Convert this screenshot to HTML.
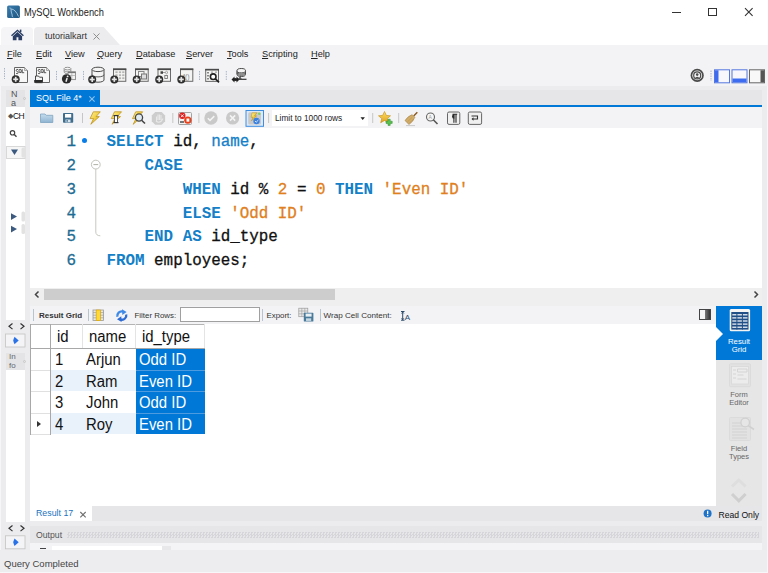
<!DOCTYPE html>
<html><head><meta charset="utf-8">
<style>
*{margin:0;padding:0;box-sizing:border-box}
html,body{width:768px;height:573px;overflow:hidden;background:#fff;font-family:"Liberation Sans",sans-serif;color:#000}
.a{position:absolute}
.t{position:absolute;white-space:nowrap;line-height:1}
.mono{font-family:"Liberation Mono",monospace}
</style></head><body>
<!-- title bar -->
<div class="a" style="left:0;top:0;width:768px;height:27px;background:#fff"></div>
<svg class="a" style="left:0;top:0" width="40" height="45" viewBox="0 0 40 45">
<defs><linearGradient id="tg" x1="0" y1="0" x2="1" y2="1"><stop offset="0" stop-color="#3a7cae"/><stop offset="1" stop-color="#1d5580"/></linearGradient></defs>
<rect x="7.1" y="5.5" width="12.8" height="12.6" rx="1.6" fill="url(#tg)"/>
<path d="M9.5,8 q1,0 2,1 q4,0.5 7,7.5 M11,9 q0,3 1.2,6 q-0.5,1.3 0.8,2.2" stroke="#d8e8f4" stroke-width="0.8" fill="none" opacity="0.85"/>
</svg>
<div class="t" style="left:24px;top:7.8px;font-size:10.2px;color:#222;transform:scaleX(0.91);transform-origin:0 0">MySQL Workbench</div>
<div class="a" style="left:672px;top:12px;width:9px;height:1px;background:#333"></div>
<div class="a" style="left:708px;top:8px;width:9px;height:8px;border:1px solid #333"></div>
<svg class="a" style="left:740px;top:4px" width="18" height="16" viewBox="740 4 18 16"><path d="M745,8.2 l7.6,7.6 M752.6,8.2 l-7.6,7.6" stroke="#333" stroke-width="1.1"/></svg>

<!-- tab strip -->
<div class="a" style="left:1px;top:27px;width:32px;height:18px;background:#f5f5f7;border-radius:4px 4px 0 0"></div>
<div class="a" style="left:34px;top:27px;width:86px;height:18px;background:#ececef;clip-path:polygon(0 0,81% 0,100% 100%,0 100%);border-radius:4px 0 0 0"></div>
<div class="t" style="left:45px;top:32px;font-size:9px;color:#333">tutorialkart</div>
<svg class="a" style="left:90px;top:30px" width="14" height="14" viewBox="90 30 14 14"><path d="M93.5,33.5 l6,6 M99.5,33.5 l-6,6" stroke="#8a8a8a" stroke-width="0.95"/></svg>

<svg class="a" style="left:0;top:0" width="40" height="45" viewBox="0 0 40 45"><path d="M17.45,29.4 L11,35.3 L12,36.3 L17.45,31.3 L22.9,36.3 L23.9,35.3 Z" fill="#2b3f66"/>
<rect x="19.8" y="29.6" width="1.6" height="2.6" fill="#2b3f66"/>
<path d="M12.8,36.2 L17.45,32 L22.1,36.2 V40.3 H18.4 V37.3 H16.5 V40.3 H12.8 Z" fill="#2b3f66"/>
</svg>
<!-- menu + toolbar bg -->
<div class="a" style="left:0;top:45px;width:768px;height:41px;background:#f3f3f5"></div>
<div class="t" style="left:7px;top:49.6px;font-size:9.2px;color:#222"><u style="text-underline-offset:1.3px">F</u>ile</div>
<div class="t" style="left:36px;top:49.6px;font-size:9.2px;color:#222"><u style="text-underline-offset:1.3px">E</u>dit</div>
<div class="t" style="left:65px;top:49.6px;font-size:9.2px;color:#222"><u style="text-underline-offset:1.3px">V</u>iew</div>
<div class="t" style="left:97px;top:49.6px;font-size:9.2px;color:#222"><u style="text-underline-offset:1.3px">Q</u>uery</div>
<div class="t" style="left:136px;top:49.6px;font-size:9.2px;color:#222"><u style="text-underline-offset:1.3px">D</u>atabase</div>
<div class="t" style="left:186px;top:49.6px;font-size:9.2px;color:#222"><u style="text-underline-offset:1.3px">S</u>erver</div>
<div class="t" style="left:227px;top:49.6px;font-size:9.2px;color:#222"><u style="text-underline-offset:1.3px">T</u>ools</div>
<div class="t" style="left:262px;top:49.6px;font-size:9.2px;color:#222"><u style="text-underline-offset:1.3px">S</u>cripting</div>
<div class="t" style="left:311px;top:49.6px;font-size:9.2px;color:#222"><u style="text-underline-offset:1.3px">H</u>elp</div>

<!-- main bg -->
<div class="a" style="left:0;top:86px;width:768px;height:464px;background:#ececef"></div>

<!-- left sidebar -->
<div class="a" style="left:0;top:86px;width:1px;height:464px;background:#f6f6f8"></div>
<div class="a" style="left:6px;top:90px;width:19px;height:17px;background:#e4e4e7"></div>
<div class="t" style="left:11px;top:89.5px;font-size:9px;line-height:9px;color:#555">N<br>a</div>
<div class="a" style="left:23px;top:97px;width:3px;height:3px;border:1px solid #c8c8c8;border-radius:50%"></div>
<div class="a" style="left:6px;top:107px;width:19px;height:213px;background:#fff"></div>
<div class="t" style="left:13px;top:112px;font-size:8.5px;color:#111;letter-spacing:-0.6px">CH</div>
<div class="t" style="left:8px;top:112px;font-size:7px;color:#555">&#x25C6;</div>
<svg class="a" style="left:0;top:0" width="40" height="573" viewBox="0 0 40 573">
<circle cx="12.5" cy="132.8" r="2.2" fill="none" stroke="#444" stroke-width="1.2"/><line x1="14" y1="134.3" x2="16.5" y2="136.8" stroke="#444" stroke-width="1.4"/>
<rect x="6.5" y="146.5" width="18.5" height="12" fill="#f6f6f6" stroke="#d8d8d8" stroke-width="1"/>
<path d="M11,149.5 h7 l-3.5,5.5z" fill="#3c5a80"/>
<rect x="21.5" y="147.5" width="3.5" height="10" rx="1.5" fill="#e2e2e2"/>
<path d="M11,213.3 v6.6 l6,-3.3z" fill="#3c5a80"/>
<path d="M11,225.8 v6.6 l6,-3.3z" fill="#3c5a80"/>
<rect x="21.5" y="211.5" width="3.5" height="10" rx="1.5" fill="#e2e2e2"/><rect x="21.5" y="224" width="3.5" height="10" rx="1.5" fill="#e2e2e2"/>
<path d="M12.5,323.5 l-3.5,2.8 l3.5,2.8 M20.5,323.5 l3.5,2.8 l-3.5,2.8" stroke="#333" stroke-width="1.2" fill="none"/>
<rect x="5.5" y="334" width="19.5" height="13" fill="#f4f4f6" stroke="#c4c4c4" stroke-width="0.8"/>
<path d="M14.5,336.8 l4.2,3.7 l-4.2,3.7 l-1.3,-3.7z" fill="#2a72e8"/><path d="M14.5,336.8 l-1.3,3.7 l1.3,3.7 l-1.5,-3.7z" fill="#5a9af0"/>
<path d="M12.5,525.5 l-3.5,2.8 l3.5,2.8 M20.5,525.5 l3.5,2.8 l-3.5,2.8" stroke="#333" stroke-width="1.2" fill="none"/>
<rect x="5.5" y="535.8" width="19.5" height="13" fill="#f4f4f6" stroke="#c4c4c4" stroke-width="0.8"/>
<path d="M14.5,538.5 l4.2,3.7 l-4.2,3.7 l-1.3,-3.7z" fill="#2a72e8"/><path d="M14.5,538.5 l-1.3,3.7 l1.3,3.7 l-1.5,-3.7z" fill="#5a9af0"/>
</svg>
<div class="a" style="left:6px;top:352.5px;width:19px;height:17px;background:#e4e4e7"></div>
<div class="t" style="left:9px;top:353px;font-size:8px;line-height:8.5px;color:#666">In<br>fo</div>
<div class="a" style="left:23px;top:360px;width:3px;height:3px;border:1px solid #c8c8c8;border-radius:50%"></div>
<div class="a" style="left:6px;top:369.5px;width:19px;height:152px;background:#fff"></div>

<!-- SQL tab strip -->
<div class="a" style="left:30px;top:90.3px;width:732px;height:16px;background:#e6e6e8"></div>
<div class="a" style="left:30px;top:90.2px;width:70px;height:16px;background:#0078d7"></div>
<div class="t" style="left:36px;top:94px;font-size:9px;color:#fff">SQL File 4*</div>
<svg class="a" style="left:86px;top:92px" width="12" height="12" viewBox="86 92 12 12"><path d="M89.3,96.3 l5.3,5.3 M94.6,96.3 l-5.3,5.3" stroke="#8cc0ee" stroke-width="1.1"/></svg>
<div class="a" style="left:30px;top:105.4px;width:732px;height:1.9px;background:#0078d7"></div>
<div class="a" style="left:30px;top:107.3px;width:732px;height:20.7px;background:#f3f3f5"></div>

<!-- code area -->
<div class="a" style="left:30px;top:128px;width:732px;height:160px;background:#fff"></div>
<style>
.cl{position:absolute;left:106.5px;font-family:"Liberation Mono",monospace;font-size:15.87px;line-height:24px;white-space:pre;color:#111;-webkit-text-stroke:0.3px #111}
.ln{position:absolute;left:40px;width:36px;text-align:right;font-family:"Liberation Mono",monospace;font-size:15.87px;line-height:24px;color:#1e6c93;-webkit-text-stroke:0.3px #1e6c93}
.k{color:#1380c8;font-weight:bold;-webkit-text-stroke:0}
.f{color:#1380c8;-webkit-text-stroke:0.3px #1380c8}
.s{color:#e0801c;-webkit-text-stroke:0.3px #e0801c}
</style>
<div class="ln" style="top:130.2px">1</div>
<div class="ln" style="top:154.0px">2</div>
<div class="ln" style="top:177.8px">3</div>
<div class="ln" style="top:201.6px">4</div>
<div class="ln" style="top:225.4px">5</div>
<div class="ln" style="top:249.2px">6</div>
<div class="a" style="left:82px;top:138px;width:5px;height:5px;border-radius:50%;background:#0a7ee8"></div>
<svg class="a" style="left:86px;top:155px" width="20" height="90" viewBox="86 155 20 90"><circle cx="95.8" cy="164.6" r="4.4" fill="#fff" stroke="#c4c4bc" stroke-width="1"/><line x1="93.4" y1="164.6" x2="98.2" y2="164.6" stroke="#b0b0a8" stroke-width="1"/><path d="M95.8,169 V232 q0,3.6 4.5,3.8" stroke="#c8c8c0" stroke-width="1" fill="none"/></svg>
<div class="cl" style="top:130.2px"><span class="k">SELECT</span> id, <span class="f">name</span>,</div>
<div class="cl" style="top:154.0px">    <span class="k">CASE</span></div>
<div class="cl" style="top:177.8px">        <span class="k">WHEN</span> id % <span class="s">2</span> = <span class="s">0</span> <span class="k">THEN</span> <span class="s">'Even ID'</span></div>
<div class="cl" style="top:201.6px">        <span class="k">ELSE</span> <span class="s">'Odd ID'</span></div>
<div class="cl" style="top:225.4px">    <span class="k">END</span> <span class="k">AS</span> id_type</div>
<div class="cl" style="top:249.2px"><span class="k">FROM</span> employees;</div>

<!-- scrollbar -->
<div class="a" style="left:30px;top:288px;width:732px;height:18px;background:#efefef"></div>
<div class="a" style="left:44px;top:289px;width:291px;height:11px;background:#cdcdcd"></div>
<svg class="a" style="left:30px;top:288px" width="732" height="13" viewBox="30 288 732 13"><path d="M38.5,291.5 l-3,3 l3,3" stroke="#444" stroke-width="1.5" fill="none"/><path d="M754.5,291.5 l3,3 l-3,3" stroke="#444" stroke-width="1.5" fill="none"/></svg>

<!-- result toolbar -->
<div class="a" style="left:30px;top:306px;width:686px;height:18px;background:#f3f3f6"></div>
<div class="a" style="left:30px;top:324px;width:686px;height:182px;background:#fff"></div>
<!-- result toolbar items -->
<div class="a" style="left:33px;top:309px;width:1px;height:12px;background:#b8c4d0"></div>
<div class="t" style="left:39px;top:312px;font-size:8px;font-weight:bold;color:#333">Result Grid</div>
<div class="a" style="left:88px;top:309px;width:1px;height:12px;background:#b8c4d0"></div>
<div class="t" style="left:134.5px;top:312.3px;font-size:7.9px;color:#333">Filter Rows:</div>
<div class="a" style="left:179.5px;top:307px;width:80px;height:15px;background:#fff;border:1px solid #a0a0a0"></div>
<div class="a" style="left:262px;top:309px;width:1px;height:12px;background:#b8c4d0"></div>
<div class="t" style="left:266.5px;top:312.3px;font-size:7.9px;color:#333">Export:</div>
<div class="a" style="left:319.5px;top:309px;width:1px;height:12px;background:#b8c4d0"></div>
<div class="t" style="left:323.5px;top:312.3px;font-size:8.1px;color:#333">Wrap Cell Content:</div>

<!-- grid -->
<div class="a" style="left:30px;top:324px;width:175px;height:111px;background:#fff"></div>
<div class="a" style="left:51px;top:370px;width:85px;height:21px;background:#e9f1fb"></div>
<div class="a" style="left:51px;top:413px;width:85px;height:21px;background:#e9f1fb"></div>
<div class="a" style="left:136px;top:348px;width:69px;height:86px;background:#0078d7"></div>
<div class="a" style="left:136px;top:370px;width:69px;height:1px;background:#4e9be0"></div>
<div class="a" style="left:136px;top:391px;width:69px;height:1px;background:#4e9be0"></div>
<div class="a" style="left:136px;top:413px;width:69px;height:1px;background:#4e9be0"></div>
<div class="a" style="left:30px;top:324px;width:175px;height:1px;background:#b4b4b4"></div>
<div class="a" style="left:30px;top:324px;width:1px;height:111px;background:#a8a8a8"></div>
<div class="a" style="left:50px;top:324px;width:1px;height:111px;background:#a8a8a8"></div>
<div class="a" style="left:30px;top:348px;width:175px;height:1px;background:#a8a8a8"></div>
<div class="a" style="left:82px;top:324px;width:1px;height:24px;background:#e4e4e4"></div>
<div class="a" style="left:135px;top:324px;width:1px;height:24px;background:#e4e4e4"></div>
<div class="a" style="left:204px;top:324px;width:1px;height:24px;background:#e4e4e4"></div>
<div class="a" style="left:31px;top:370px;width:19px;height:1px;background:#e0e0e0"></div>
<div class="a" style="left:31px;top:391px;width:19px;height:1px;background:#e0e0e0"></div>
<div class="a" style="left:31px;top:413px;width:19px;height:1px;background:#e0e0e0"></div>
<div class="a" style="left:31px;top:434px;width:19px;height:1px;background:#e0e0e0"></div>
<div class="a" style="left:37px;top:421px;width:0;height:0;border-left:4px solid #333;border-top:3.5px solid transparent;border-bottom:3.5px solid transparent"></div>
<style>.g{position:absolute;white-space:nowrap;font-size:16px;line-height:16px;color:#111;transform:scaleX(0.93);transform-origin:0 0}.gw{color:#fff}</style>
<div class="g" style="left:57px;top:329px">id</div>
<div class="g" style="left:89px;top:329px">name</div>
<div class="g" style="left:142px;top:329px">id_type</div>
<div class="g" style="left:55px;top:351.8px">1</div>
<div class="g" style="left:86px;top:351.8px">Arjun</div>
<div class="g gw" style="left:139px;top:351.8px">Odd ID</div>
<div class="g" style="left:55px;top:373.5px">2</div>
<div class="g" style="left:86px;top:373.5px">Ram</div>
<div class="g gw" style="left:139px;top:373.5px">Even ID</div>
<div class="g" style="left:55px;top:395px">3</div>
<div class="g" style="left:86px;top:395px">John</div>
<div class="g gw" style="left:139px;top:395px">Odd ID</div>
<div class="g" style="left:55px;top:416.5px">4</div>
<div class="g" style="left:86px;top:416.5px">Roy</div>
<div class="g gw" style="left:139px;top:416.5px">Even ID</div>

<!-- side panel -->
<div class="a" style="left:716px;top:306px;width:46px;height:200px;background:#e6e6e6"></div>
<div class="a" style="left:716px;top:306px;width:46px;height:54px;background:#0078d7"></div>
<div class="a" style="left:716px;top:327px;width:0;height:0;border-left:7px solid #fff;border-top:7.3px solid transparent;border-bottom:7.3px solid transparent"></div>
<svg class="a" style="left:726px;top:306px" width="30" height="30" viewBox="726 306 30 30">
<rect x="729.7" y="309" width="20.4" height="22.2" rx="1.5" fill="#f4f4f4"/>
<rect x="731.3" y="312" width="17.2" height="17.6" fill="#1f4f86"/>
<g stroke="#fff" stroke-width="1.2"><line x1="732.3" y1="314.8" x2="747.5" y2="314.8"/><line x1="732.3" y1="317.9" x2="747.5" y2="317.9"/><line x1="732.3" y1="321" x2="747.5" y2="321"/><line x1="732.3" y1="324.1" x2="747.5" y2="324.1"/><line x1="732.3" y1="327.2" x2="747.5" y2="327.2"/></g>
<g stroke="#1f4f86" stroke-width="1"><line x1="736.9" y1="312" x2="736.9" y2="329.6"/><line x1="742.4" y1="312" x2="742.4" y2="329.6"/></g>
</svg>
<div class="t" style="left:716px;top:337.5px;width:46px;text-align:center;font-size:7.8px;line-height:8px;color:#fff">Result<br>Grid</div>
<div class="t" style="left:716px;top:391px;width:46px;text-align:center;font-size:7.5px;line-height:8px;color:#666">Form<br>Editor</div>
<div class="t" style="left:716px;top:445px;width:46px;text-align:center;font-size:7.5px;line-height:8px;color:#666">Field<br>Types</div>
<div class="a" style="left:699.3px;top:309px;width:11.5px;height:11px;border:1px solid #444;background:linear-gradient(90deg,#f4f4f4 50%,#777 50%,#333 100%)"></div>

<!-- bottom result tabs -->
<div class="a" style="left:30px;top:506px;width:732px;height:15px;background:#e6e6e9"></div>
<div class="a" style="left:30px;top:506px;width:62px;height:15px;background:#fff"></div>
<div class="t" style="left:36px;top:509px;font-size:8.8px;color:#1a72c0">Result 17</div>
<svg class="a" style="left:77px;top:509px" width="12" height="12" viewBox="77 509 12 12"><path d="M80.3,512 l5.4,5.4 M85.7,512 l-5.4,5.4" stroke="#707070" stroke-width="1.1"/></svg>
<div class="t" style="left:718.5px;top:510.5px;font-size:8.6px;color:#111">Read Only</div>

<div class="a" style="left:30px;top:526px;width:732px;height:17px;background:#e6e6e9"></div>
<div class="t" style="left:36px;top:531px;font-size:8.7px;color:#555">Output</div>
<div class="a" style="left:67px;top:532px;width:692px;height:6px;background:repeating-conic-gradient(#d6d6da 0 25%,transparent 0 50%) 0 0/3px 3px"></div>
<div class="a" style="left:30px;top:543px;width:732px;height:7px;background:#f4f4f7"></div>
<div class="a" style="left:52px;top:545.5px;width:110px;height:4.5px;background:#fff"></div>
<div class="a" style="left:162px;top:545.5px;width:9px;height:4.5px;background:#e8e8ea"></div>
<div class="a" style="left:40px;top:547.5px;width:6px;height:1px;background:#444"></div>
<!-- status bar -->
<div class="a" style="left:0;top:550px;width:768px;height:22px;background:#ededf0"></div>
<div class="t" style="left:4px;top:559px;font-size:9.5px;color:#444">Query Completed</div>
<div class="a" style="left:767px;top:86px;width:1px;height:487px;background:#f7f7f9"></div>
<div class="a" style="left:0;top:572px;width:768px;height:1px;background:#f7f7f9"></div>
<!--ICONS1--><svg class="a" style="left:0;top:0.5px" width="768" height="573" viewBox="0 0 768 573"><line x1="4.5" y1="67" x2="4.5" y2="78" stroke="#a9b6c8" stroke-width="1" stroke-dasharray="1.5,1"/><path d="M14.5,66.5 H24.5 L27.5,69.5 V81.5 H14.5 Z" fill="#f7f7f7" stroke="#666" stroke-width="1"/><path d="M24.5,66.5 V69.5 H27.5" fill="#ddd" stroke="#888" stroke-width="0.7"/><path d="M18.2,68.5 q-2,-0.6 -2,0.9 q0,0.9 1,1.1 q1,0.3 1,1.2 q0,1.4 -2.1,0.8" stroke="#3a3a3a" stroke-width="0.85" fill="none"/><ellipse cx="20.099999999999998" cy="69.95" rx="1.2" ry="1.65" stroke="#3a3a3a" stroke-width="0.85" fill="none"/><path d="M20.7,71.2 l0.9,0.9" stroke="#3a3a3a" stroke-width="0.8"/><path d="M22.2,68.2 v3.5 h2" stroke="#3a3a3a" stroke-width="0.85" fill="none"/><circle cx="15.7" cy="78.3" r="4.0" fill="#2e2e2e"/><rect x="13.2" y="77.45" width="5" height="1.7" fill="#e4e4e4"/><rect x="14.85" y="75.8" width="1.7" height="5" fill="#e4e4e4"/><path d="M36.5,66.5 H46.5 L49.5,69.5 V81.5 H36.5 Z" fill="#f7f7f7" stroke="#666" stroke-width="1"/><path d="M46.5,66.5 V69.5 H49.5" fill="#ddd" stroke="#888" stroke-width="0.7"/><path d="M40.2,68.5 q-2,-0.6 -2,0.9 q0,0.9 1,1.1 q1,0.3 1,1.2 q0,1.4 -2.1,0.8" stroke="#3a3a3a" stroke-width="0.85" fill="none"/><ellipse cx="42.1" cy="69.95" rx="1.2" ry="1.65" stroke="#3a3a3a" stroke-width="0.85" fill="none"/><path d="M42.7,71.2 l0.9,0.9" stroke="#3a3a3a" stroke-width="0.8"/><path d="M44.2,68.2 v3.5 h2" stroke="#3a3a3a" stroke-width="0.85" fill="none"/><path d="M35.5,75 h3 l1,1.2 h3 v5.5 h-7z" fill="#f4f4f4" stroke="#333" stroke-width="0.9"/><path d="M34.2,79 h8.6 l-1.2,2.8 h-7.4z" fill="#2a2a2a"/><line x1="56.5" y1="70" x2="56.5" y2="80" stroke="#a9b6c8" stroke-width="1" stroke-dasharray="1.5,1"/><path d="M64.2,67.6 V71.2 A3.3,1.3 0 0 0 70.8,71.2 V67.6" fill="#f2f2f2" stroke="#8a8a8a" stroke-width="0.9"/><ellipse cx="67.5" cy="67.6" rx="3.3" ry="1.3" fill="#f8f8f8" stroke="#8a8a8a" stroke-width="0.9"/><path d="M64.2,69.4 A3.3,1.3 0 0 0 70.8,69.4" fill="none" stroke="#999" stroke-width="0.8"/><rect x="68" y="70.8" width="7.5" height="7.8" fill="#f2f2f2" stroke="#8a8a8a" stroke-width="0.9"/><rect x="68" y="70.8" width="7.5" height="1.3" fill="#777"/><line x1="71.8" y1="72" x2="71.8" y2="78.6" stroke="#aaa" stroke-width="0.7"/><line x1="68" y1="74.5" x2="75.5" y2="74.5" stroke="#aaa" stroke-width="0.7"/><circle cx="66.6" cy="77.9" r="4.7" fill="#2b2b2b"/><circle cx="67.6" cy="75.4" r="0.9" fill="#eee"/><path d="M67.1,77 L66,80.8" stroke="#eee" stroke-width="1.5"/><line x1="83.5" y1="70" x2="83.5" y2="80" stroke="#a9b6c8" stroke-width="1" stroke-dasharray="1.5,1"/><path d="M92,68.4 V79.0 A6.0,2.2 0 0 0 104,79.0 V68.4" fill="#f4f4f4" stroke="#4a4a4a" stroke-width="1"/><ellipse cx="98.0" cy="68.4" rx="6.0" ry="2.2" fill="#f4f4f4" stroke="#4a4a4a" stroke-width="1"/><path d="M92,73.7 A6.0,2.2 0 0 0 104,73.7" fill="none" stroke="#4a4a4a" stroke-width="0.9"/><circle cx="92.2" cy="78.5" r="4.0" fill="#2e2e2e"/><rect x="89.7" y="77.65" width="5" height="1.7" fill="#e4e4e4"/><rect x="91.35000000000001" y="76.0" width="1.7" height="5" fill="#e4e4e4"/><rect x="113.5" y="68.0" width="12.299999999999997" height="12.299999999999997" fill="#f4f4f2" stroke="#6a6a6a" stroke-width="1"/><rect x="113" y="67.5" width="13.299999999999997" height="1.6" fill="#4a4a4a"/><rect x="115.4" y="70.3" width="2.2" height="1.8" fill="#b4b4b4"/><rect x="115.4" y="73.3" width="2.2" height="1.8" fill="#b4b4b4"/><rect x="115.4" y="76.3" width="2.2" height="1.8" fill="#b4b4b4"/><rect x="118.9" y="70.3" width="2.2" height="1.8" fill="#b4b4b4"/><rect x="118.9" y="73.3" width="2.2" height="1.8" fill="#b4b4b4"/><rect x="118.9" y="76.3" width="2.2" height="1.8" fill="#b4b4b4"/><rect x="122.2" y="70.3" width="2.2" height="1.8" fill="#b4b4b4"/><rect x="122.2" y="73.3" width="2.2" height="1.8" fill="#b4b4b4"/><rect x="122.2" y="76.3" width="2.2" height="1.8" fill="#b4b4b4"/><circle cx="114.3" cy="78.4" r="4.0" fill="#2e2e2e"/><rect x="111.8" y="77.55000000000001" width="5" height="1.7" fill="#e4e4e4"/><rect x="113.45" y="75.9" width="1.7" height="5" fill="#e4e4e4"/><rect x="135.5" y="68.0" width="12.699999999999989" height="12.299999999999997" fill="#f4f4f2" stroke="#6a6a6a" stroke-width="1"/><rect x="135" y="67.5" width="13.699999999999989" height="1.6" fill="#4a4a4a"/><rect x="138.5" y="70.5" width="5.5" height="5" fill="none" stroke="#888" stroke-width="1"/><rect x="141.5" y="73" width="5" height="5" fill="#ddd" stroke="#777" stroke-width="1"/><circle cx="136.7" cy="78.4" r="4.0" fill="#2e2e2e"/><rect x="134.2" y="77.55000000000001" width="5" height="1.7" fill="#e4e4e4"/><rect x="135.85" y="75.9" width="1.7" height="5" fill="#e4e4e4"/><rect x="158.0" y="68.0" width="12.5" height="12.299999999999997" fill="#f4f4f2" stroke="#6a6a6a" stroke-width="1"/><rect x="157.5" y="67.5" width="13.5" height="1.6" fill="#4a4a4a"/><rect x="160.5" y="70.3" width="2.5" height="2.5" fill="#444"/><path d="M163,71.5 h2 l1.5,-1.3 l1.5,1.3 l-1.5,1.3 l-1.5,-1.3" fill="none" stroke="#888" stroke-width="0.8"/><rect x="164.8" y="74.5" width="2.6" height="3" fill="none" stroke="#777" stroke-width="0.9"/><circle cx="159.2" cy="78.4" r="4.0" fill="#2e2e2e"/><rect x="156.7" y="77.55000000000001" width="5" height="1.7" fill="#e4e4e4"/><rect x="158.35" y="75.9" width="1.7" height="5" fill="#e4e4e4"/><rect x="180.5" y="68.0" width="12.300000000000011" height="12.299999999999997" fill="#f4f4f2" stroke="#6a6a6a" stroke-width="1"/><rect x="180" y="67.5" width="13.300000000000011" height="1.6" fill="#4a4a4a"/><text x="183" y="77.5" font-family="Liberation Sans" font-size="7" fill="#888">f()</text><circle cx="181.3" cy="78.4" r="4.0" fill="#2e2e2e"/><rect x="178.8" y="77.55000000000001" width="5" height="1.7" fill="#e4e4e4"/><rect x="180.45000000000002" y="75.9" width="1.7" height="5" fill="#e4e4e4"/><line x1="199.5" y1="70" x2="199.5" y2="80" stroke="#a9b6c8" stroke-width="1" stroke-dasharray="1.5,1"/><rect x="205.7" y="68.4" width="12.800000000000011" height="12.0" fill="#f4f4f2" stroke="#6a6a6a" stroke-width="1"/><rect x="205.2" y="67.9" width="13.800000000000011" height="1.6" fill="#4a4a4a"/><rect x="207" y="71" width="2" height="1.5" fill="#888"/><rect x="207" y="74" width="2" height="1.5" fill="#888"/><rect x="207" y="77" width="2" height="1.5" fill="#888"/><rect x="211" y="70.5" width="2" height="1.3" fill="#aaa"/><rect x="215" y="70.5" width="2" height="1.3" fill="#aaa"/><circle cx="213.2" cy="75.7" r="2.8" fill="#fff" stroke="#222" stroke-width="1.6"/><line x1="215.2" y1="77.7" x2="219" y2="81.3" stroke="#222" stroke-width="1.8"/><line x1="226.3" y1="70" x2="226.3" y2="80" stroke="#a9b6c8" stroke-width="1" stroke-dasharray="1.5,1"/><path d="M237,69.7 V73.3 A4.25,2.2 0 0 0 245.5,73.3 V69.7" fill="#f4f4f4" stroke="#4a4a4a" stroke-width="1"/><ellipse cx="241.25" cy="69.7" rx="4.25" ry="2.2" fill="#f4f4f4" stroke="#4a4a4a" stroke-width="1"/><path d="M237,70.9 A4.25,2.2 0 0 0 245.5,70.9" fill="none" stroke="#4a4a4a" stroke-width="0.9"/><path d="M237,72.10000000000001 A4.25,2.2 0 0 0 245.5,72.10000000000001" fill="none" stroke="#4a4a4a" stroke-width="0.9"/><path d="M231.5,78.5 l3,-3 v1.8 h2 v2.4 h-2 v1.8z" fill="#222"/><path d="M239.5,78.6 l-3,3 v-1.8 h-2 v-2.4 h2 v-1.8z" fill="#222"/><line x1="238" y1="78.3" x2="246.5" y2="78.3" stroke="#333" stroke-width="1.2"/><path d="M240,75.7 l1.8,2 h-3.6z" fill="#333"/><circle cx="697.2" cy="74.4" r="6.6" fill="#4a4a4a"/><circle cx="697.2" cy="74.4" r="4.9" fill="#f3f3f5"/><circle cx="697.2" cy="74.4" r="3.5" fill="none" stroke="#4a4a4a" stroke-width="1.2"/><circle cx="697.2" cy="73.6" r="1.3" fill="#4a4a4a"/><path d="M694.6,77.2 q2.6,-3 5.2,0z" fill="#4a4a4a"/><line x1="711" y1="69.5" x2="711" y2="80" stroke="#a9b6c8" stroke-width="1" stroke-dasharray="1.5,1"/><rect x="714.5" y="68.8" width="15" height="13" fill="#f8f8fc" stroke="#5577dd" stroke-width="1"/><rect x="715" y="69.3" width="3.5" height="12" fill="#3d6cf0"/><rect x="732" y="68.8" width="15" height="13" fill="#f8f8fc" stroke="#5577dd" stroke-width="1"/><rect x="732.5" y="77.5" width="14" height="3.8" fill="#3d6cf0"/><rect x="749.5" y="68.8" width="15" height="13" fill="#f8f8f8" stroke="#666" stroke-width="1"/><rect x="760.5" y="69.3" width="3.5" height="12" fill="#555"/></svg><!--/ICONS1-->
<!--ICONS2--><div class="a" style="left:271.5px;top:110px;width:96.5px;height:16px;background:#fff"></div>
<div class="t" style="left:275px;top:114.2px;font-size:8.8px;color:#222;transform:scaleX(0.94);transform-origin:0 0">Limit to 1000 rows</div>
<svg class="a" style="left:0;top:0" width="768" height="573" viewBox="0 0 768 573"><defs>
<linearGradient id="fold" x1="0" y1="0" x2="0" y2="1"><stop offset="0" stop-color="#c5dcee"/><stop offset="1" stop-color="#8fb4d2"/></linearGradient>
<linearGradient id="bolt" x1="0" y1="0" x2="1" y2="1"><stop offset="0" stop-color="#fff2a0"/><stop offset="0.5" stop-color="#f0cf40"/><stop offset="1" stop-color="#c89a18"/></linearGradient>
<linearGradient id="star" x1="0" y1="0" x2="0" y2="1"><stop offset="0" stop-color="#ffe060"/><stop offset="1" stop-color="#e0a020"/></linearGradient>
</defs><path d="M40.5,114 h4.5 l1.2,1.3 h6.6 v7.2 h-12.3z" fill="url(#fold)" stroke="#7fa3c0" stroke-width="0.8"/><rect x="63" y="113" width="10.2" height="9.8" rx="0.8" fill="#3f6d8e"/><rect x="65" y="114" width="6.2" height="3.6" fill="#fff"/><rect x="65.5" y="119.5" width="5" height="2.8" fill="#d8e4ec"/><rect x="66.5" y="120" width="1.3" height="1.8" fill="#3f6d8e"/><rect x="82.0" y="113" width="1" height="10" fill="#c6c6c6"/><path d="M93.3,111.8 h7 l-4.2,4.8 h3.2 l-8.5,7.7 l2.8,-5.7 h-3.5z" fill="url(#bolt)" stroke="#b88a10" stroke-width="0.7"/><path d="M114.5,111.8 h7 l-4.2,4.8 h3.2 l-8.5,7.7 l2.8,-5.7 h-3.5z" fill="url(#bolt)" stroke="#b88a10" stroke-width="0.7"/><rect x="114.5" y="115.5" width="3" height="7" fill="#fff" stroke="#333" stroke-width="0.8"/><rect x="113.5" y="115" width="5" height="1.2" fill="#333"/><rect x="113.5" y="122" width="5" height="1.2" fill="#333"/><path d="M135.7,111.8 h7 l-4.2,4.8 h3.2 l-8.5,7.7 l2.8,-5.7 h-3.5z" fill="url(#bolt)" stroke="#b88a10" stroke-width="0.7"/><circle cx="139" cy="117.5" r="3.6" fill="#dfeaf3" stroke="#444" stroke-width="1.3"/><line x1="141.6" y1="120.2" x2="145" y2="123.5" stroke="#444" stroke-width="1.6"/><path d="M155.2,112 h6.5 l3.4,3.4 v5.9 l-3.4,3.4 h-6.5 l-3.4,-3.4 v-5.9z" fill="#cdcdcd"/><path d="M156.5,121 v-4.5 M158,120 v-5.5 M159.5,120 v-5.5 M161,120 v-5 M156,121 q2.5,2.5 5.5,0 l1.5,-2.5" stroke="#e8e8e8" stroke-width="1.1" fill="none"/><rect x="172.3" y="113" width="1" height="10" fill="#c6c6c6"/><rect x="178.5" y="112.5" width="13" height="12" rx="1" fill="#f2f2f2" stroke="#9a9a9a" stroke-width="0.9"/><circle cx="182.3" cy="115.8" r="3.2" fill="#e02020"/><path d="M180.9,114.4 l2.8,2.8 M183.7,114.4 l-2.8,2.8" stroke="#fff" stroke-width="0.9"/><circle cx="187.8" cy="120.2" r="3.6" fill="#e8401a"/><rect x="186.5" y="118.5" width="2.8" height="3.2" fill="#fff"/><rect x="180" y="121" width="4" height="2" fill="#777"/><rect x="198.4" y="113" width="1" height="10" fill="#c6c6c6"/><circle cx="211" cy="118" r="6.7" fill="#c9c9c9"/><path d="M207.8,118.2 l2.2,2.2 l4.3,-4.3" stroke="#f4f4f4" stroke-width="1.5" fill="none"/><circle cx="232.6" cy="118" r="6.6" fill="#c9c9c9"/><path d="M230,115.4 l5.2,5.2 M235.2,115.4 l-5.2,5.2" stroke="#f4f4f4" stroke-width="1.5" fill="none"/><rect x="246" y="110.5" width="17.5" height="15.8" fill="#dde8f4" stroke="#3d8ee0" stroke-width="1"/><rect x="248.2" y="112.2" width="12.8" height="12.2" rx="1.5" fill="#c9c9c9"/><path d="M252,112.8 h5 l-2.5,3 h2 l-5,5 l1.6,-3.5 h-2z" fill="url(#bolt)" stroke="#b88a10" stroke-width="0.5"/><circle cx="256.5" cy="121" r="3.2" fill="#3b82e0"/><path d="M255,121 l1.2,1.2 l2.2,-2.2" stroke="#fff" stroke-width="0.8" fill="none"/><circle cx="259.3" cy="113.8" r="1.2" fill="#7ad060"/><rect x="268.1" y="113" width="1" height="10" fill="#c6c6c6"/><rect x="372.2" y="113" width="1" height="10" fill="#c6c6c6"/><path d="M384.5,111.5 l1.8,3.9 l4.2,0.4 l-3.2,2.8 l1,4.1 l-3.8,-2.2 l-3.8,2.2 l1,-4.1 l-3.2,-2.8 l4.2,-0.4z" fill="url(#star)" stroke="#c08a10" stroke-width="0.6"/><path d="M388,119.2 h2.2 v2 h2 v2.2 h-2 v2 h-2.2 v-2 h-2 v-2.2 h2z" fill="#5cc050" stroke="#2e8a2a" stroke-width="0.5"/><rect x="398.2" y="113" width="1" height="10" fill="#c6c6c6"/><path d="M416.8,111.8 l1,1 l-3.6,3.8 l-1,-1z" fill="#8a5a20"/><path d="M405,120.5 q3,-4.5 7.2,-5.8 l2.6,2.6 q-1.5,4.3 -5.8,7.2z" fill="#d2ad6a" stroke="#a07a3a" stroke-width="0.6"/><path d="M407.5,121.8 l4.8,-4.6 M409.5,123 l4,-4" stroke="#b08a48" stroke-width="0.5"/><path d="M406,125.6 h9" stroke="#c4c4c4" stroke-width="0.9"/><circle cx="430.5" cy="117" r="4" fill="#f6f6f6" stroke="#666" stroke-width="1.1"/><line x1="433.3" y1="119.8" x2="437.5" y2="124" stroke="#555" stroke-width="1.6"/><text x="428.6" y="119" font-family="Liberation Sans" font-size="5" fill="#999">A</text><rect x="447.5" y="112" width="12.3" height="12.4" rx="1.5" fill="#f0f0f0" stroke="#666" stroke-width="1"/><path d="M452.6,114.2 h4.6 M453.9,114.2 v8.6 M456,114.2 v8.6" stroke="#2a2a2a" stroke-width="1.1" fill="none"/><path d="M454.3,114 a2.3,2.4 0 0 0 0,4.8z" fill="#2a2a2a"/><rect x="468.3" y="112" width="13.3" height="12.4" rx="1.5" fill="#f0f0f0" stroke="#666" stroke-width="1"/><path d="M471.5,116 h6 v3 h-5" stroke="#333" stroke-width="1.1" fill="none"/><path d="M471.5,119 l2,-1.8 v3.6z" fill="#333"/><path d="M360.5,117.3 h4.4 l-2.2,2.6z" fill="#222"/></svg><!--/ICONS2-->
<!--ICONS3--><svg class="a" style="left:0;top:0" width="768" height="573" viewBox="0 0 768 573"><rect x="93" y="310" width="10.5" height="10.5" fill="#e8e8e8" stroke="#9a9a9a" stroke-width="0.8"/><line x1="93" y1="312.6" x2="103.5" y2="312.6" stroke="#9a9a9a" stroke-width="0.7"/><line x1="93" y1="315.2" x2="103.5" y2="315.2" stroke="#9a9a9a" stroke-width="0.7"/><line x1="93" y1="317.8" x2="103.5" y2="317.8" stroke="#9a9a9a" stroke-width="0.7"/><rect x="96.2" y="310" width="4.3" height="10.6" fill="#ffd83a" stroke="#e0a800" stroke-width="0.7"/><path d="M117.4,316.8 A4.4,4.4 0 0 1 122.8,311.6" stroke="#3f8ae6" stroke-width="2.3" fill="none"/><path d="M122,309.3 l4.6,2.6 l-4.3,3z" fill="#3f8ae6"/><path d="M126.2,314.4 A4.4,4.4 0 0 1 120.8,319.6" stroke="#2c6cd4" stroke-width="2.3" fill="none"/><path d="M121.6,321.9 l-4.6,-2.6 l4.3,-3z" fill="#2c6cd4"/><rect x="298.8" y="308.2" width="9" height="8.5" fill="#eaeaea" stroke="#9a9a9a" stroke-width="0.7"/><line x1="298.8" y1="311" x2="307.8" y2="311" stroke="#9a9a9a" stroke-width="0.6"/><line x1="298.8" y1="313.8" x2="307.8" y2="313.8" stroke="#9a9a9a" stroke-width="0.6"/><line x1="301.8" y1="308.2" x2="301.8" y2="316.7" stroke="#9a9a9a" stroke-width="0.6"/><line x1="304.8" y1="308.2" x2="304.8" y2="316.7" stroke="#9a9a9a" stroke-width="0.6"/><rect x="303.8" y="312.8" width="9.6" height="8.8" rx="0.6" fill="#4a7a9a"/><rect x="305.6" y="313.6" width="6" height="3" fill="#e8f0f4"/><rect x="306" y="318.3" width="5.2" height="2.6" fill="#c8d8e2"/><path d="M401,311.5 h3.5 M401,320.2 h3.5 M402.7,311.5 v8.7" stroke="#2a4a6a" stroke-width="1" fill="none"/><path d="M401.5,313.5 l1.2,-1.5 l1.2,1.5 M401.5,318.2 l1.2,1.5 l1.2,-1.5" stroke="#2a4a6a" stroke-width="0.8" fill="none"/><text x="404.8" y="319.8" font-family="Liberation Sans" font-size="8" fill="#2a4a6a">A</text><rect x="729.5" y="363.8" width="21" height="22.8" rx="1" fill="#e2e2e2" stroke="#d8d8d8" stroke-width="0.8"/><rect x="731.5" y="366.5" width="17" height="17.5" fill="#ececec" stroke="#d6d6d6" stroke-width="0.7"/><path d="M733,370 h3 M733,374 h3 M733,378 h3 M737.5,369 h9.5 v3 h-9.5z M737.5,375 h6 M737.5,379 h9" stroke="#d2d2d2" stroke-width="0.9" fill="none"/><rect x="729.5" y="417.5" width="21" height="23" rx="1" fill="#e2e2e2" stroke="#d8d8d8" stroke-width="0.8"/><path d="M732,423 h15 M732,426 h15 M732,429 h15 M732,432 h15 M732,435 h15 M732,438 h15" stroke="#d2d2d2" stroke-width="1"/><circle cx="745.2" cy="422.5" r="4.3" fill="#e6e6e6" stroke="#d0d0d0" stroke-width="1.3"/><line x1="748.3" y1="425.6" x2="754" y2="429.5" stroke="#d0d0d0" stroke-width="1.6"/><path d="M732,486.5 l6.8,-6.5 l6.8,6.5" stroke="#dedede" stroke-width="3" fill="none"/><path d="M732,494 l6.8,6.8 l6.8,-6.8" stroke="#cfcfcf" stroke-width="3" fill="none"/><circle cx="707.6" cy="513.5" r="4" fill="#1e72c8"/><rect x="707" y="510.8" width="1.3" height="3.4" fill="#fff"/><rect x="707" y="515" width="1.3" height="1.2" fill="#fff"/></svg><!--/ICONS3-->
</body></html>
